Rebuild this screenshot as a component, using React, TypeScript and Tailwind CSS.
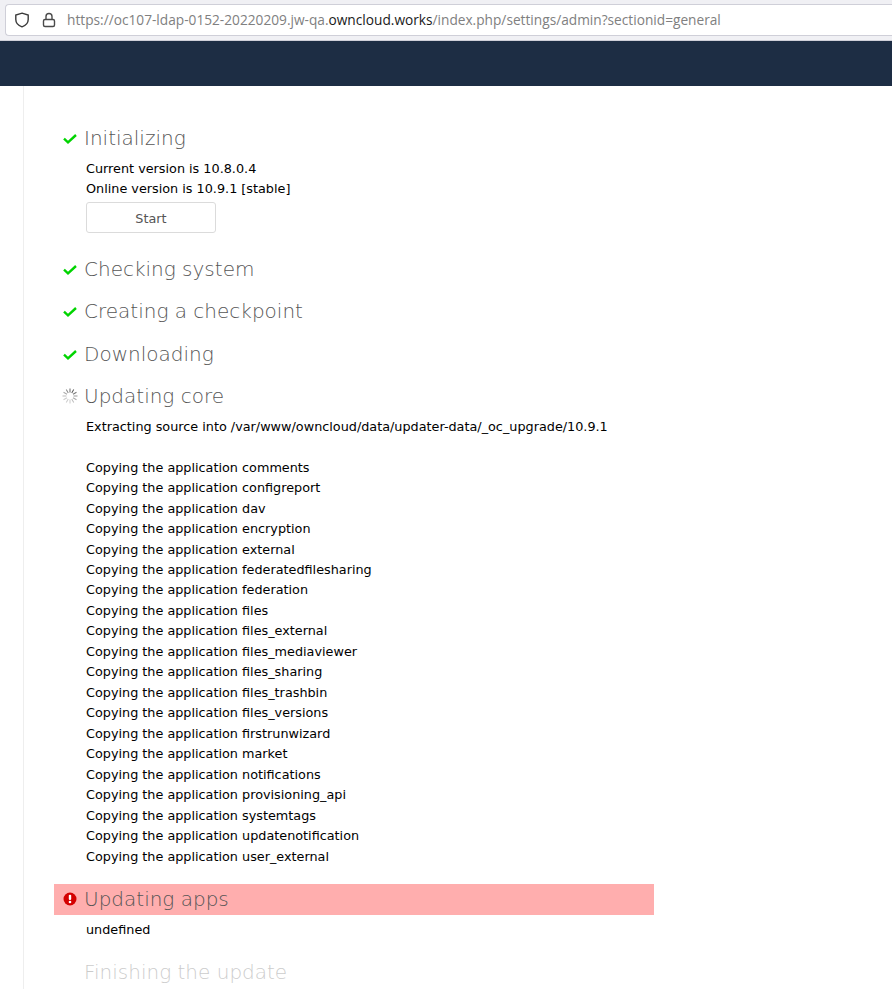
import React from "react";

const apps = [
  "comments", "configreport", "dav", "encryption", "external", "federatedfilesharing", "federation",
  "files", "files_external", "files_mediaviewer", "files_sharing", "files_trashbin", "files_versions",
  "firstrunwizard", "market", "notifications", "provisioning_api", "systemtags", "updatenotification", "user_external",
];

function Tick() {
  return (
    <svg width="14" height="10" viewBox="0 0 14 10" fill="none" stroke="#00d400" strokeWidth="2.4" className="absolute left-[9px] top-[11px]">
      <polyline points="1,4.700 5,8.300 13,1" />
    </svg>
  );
}

function Spinner() {
  const bars = [0, 30, 60, 90, 120, 150, 180, 210, 240, 270, 300, 330];
  const shades = ["#666", "#555", "#777", "#999", "#aaa", "#bbb", "#ccc", "#ccc", "#ccc", "#bbb", "#aaa", "#888"];
  return (
    <svg width="16" height="16" viewBox="0 0 16 16" className="absolute left-[8px] top-[7px]">
      {bars.map((a, i) => (
        <line key={a} x1="8" y1="0.500" x2="8" y2="4.500" stroke={shades[i]} strokeWidth="1" transform={`rotate(${a} 8 8)`} />
      ))}
    </svg>
  );
}

function Heading({ icon, children, className }: { icon?: React.ReactNode; children: React.ReactNode; className?: string }) {
  return (
    <h2 className={`relative h-[31px] pl-[30px] text-[20px] font-extralight leading-[31px] text-[#555] ${className ?? ""}`}>
      {icon}
      <span className="opacity-[0.99]">{children}</span>
    </h2>
  );
}

export default function App() {
  return (
    <div className="h-[989px] w-[892px] overflow-hidden bg-white font-['DejaVu_Sans',sans-serif] text-[12.8px] leading-[20.47px] text-black">
      {/* browser bar */}
      <div className="h-[41px] bg-[#f0f0f4] border-b border-[#cfcfd8] pt-[4px] pl-[5px]">
        <div className="flex h-[32px] items-center rounded-l-[4px] border border-r-0 border-[#cfcfd8] bg-white pl-[8px] font-['Open_Sans',sans-serif] text-[13.7px]">
          <svg width="16" height="16" viewBox="0 0 16 16" fill="none" stroke="#3a3a3a" strokeWidth="1.4">
            <path d="M8 1.2 14.2 3v4.500c0 3.600-2.600 6-6.200 7.300C4.400 13.500 1.800 11.100 1.800 7.500V3z" />
          </svg>
          <svg width="16" height="16" viewBox="0 0 16 16" fill="none" stroke="#4a4a4a" strokeWidth="1.4" className="ml-[11px]">
            <rect x="2.500" y="7.500" width="11" height="7" rx="1.500" />
            <path d="M5 7.500V4.500a3 3 0 0 1 6 0v3" />
          </svg>
          <span className="ml-[10px] whitespace-nowrap text-[#808080]">
            https://oc107-ldap-0152-20220209.jw-qa.<span className="text-[#1a1a1a]">owncloud.works</span>/index.php/settings/admin?sectionid=general
          </span>
        </div>
      </div>

      {/* owncloud header */}
      <div className="h-[45px] bg-[#1d2d44]" />

      <div className="flex">
        <div className="h-[903px] w-[24px] border-r border-[#eee]" />
        <div className="w-[630px] pl-[30px] pt-[37px]">
          <Heading icon={<Tick />}>Initializing</Heading>
          <div className="pl-[32px] pt-[5px]">
            <div>Current version is 10.8.0.4</div>
            <div>Online version is 10.9.1 [stable]</div>
            <button className="mt-[2px] block h-[31px] w-[130px] rounded-[3px] border border-[#dbdbdb] bg-white pt-[3px] text-center text-[#555]">Start</button>
          </div>
          <Heading icon={<Tick />} className="mt-[21px]">Checking system</Heading>
          <Heading icon={<Tick />} className="mt-[11px]">Creating a checkpoint</Heading>
          <Heading icon={<Tick />} className="mt-[12px]">Downloading</Heading>
          <Heading icon={<Spinner />} className="mt-[11px]">Updating core</Heading>
          <div className="pl-[32px] pt-[4.800px]">
            <div>Extracting source into /var/www/owncloud/data/updater-data/_oc_upgrade/10.9.1</div>
            <div className="h-[20.47px]" />
            {apps.map((a) => (
              <div key={a}>Copying the application {a}</div>
            ))}
          </div>
          <Heading
            className="mt-[17.200px] bg-[#ffaeae]"
            icon={
              <svg width="14" height="14" viewBox="0 0 14 14" className="absolute left-[9px] top-[8px]">
                <circle cx="7" cy="7" r="6.500" fill="#d40000" />
                <rect x="5.800" y="2.800" width="2.400" height="5.200" rx="1" fill="#fff" />
                <circle cx="7" cy="10" r="1.300" fill="#fff" />
              </svg>
            }
          >
            Updating apps
          </Heading>
          <div className="pl-[32px] pt-[5px]">undefined</div>
          <Heading className="mt-[16px] opacity-30">Finishing the update</Heading>
        </div>
      </div>
    </div>
  );
}
